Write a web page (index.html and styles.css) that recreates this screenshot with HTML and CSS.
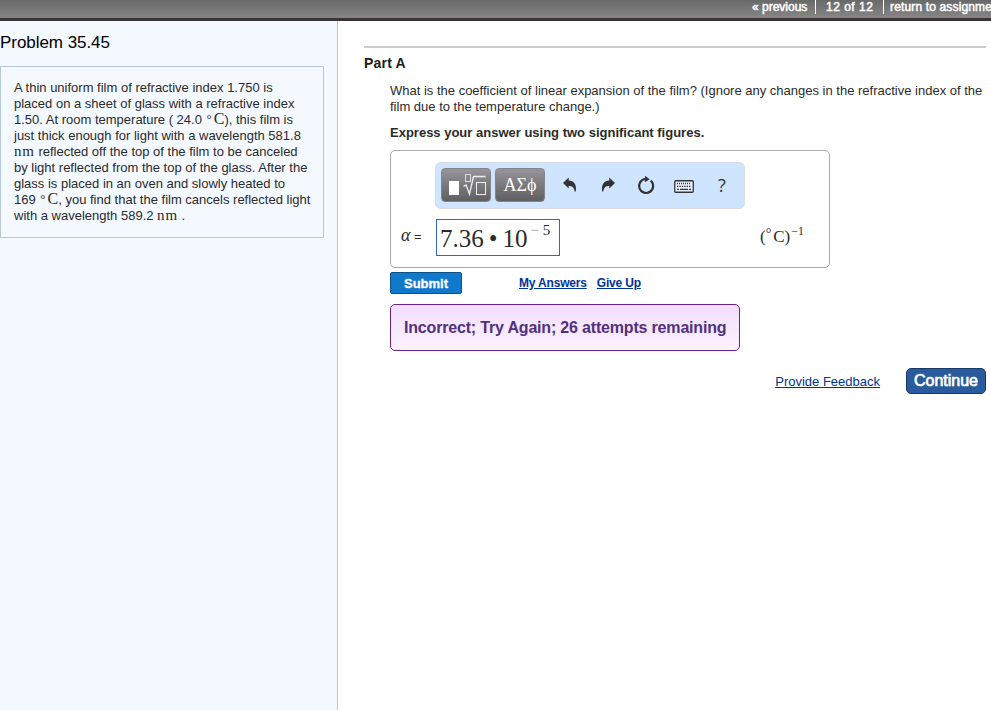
FILE: index.html
```html
<!DOCTYPE html>
<html>
	<head>
		<meta charset="UTF-8">
		<title>Problem 35.45</title>
		<link rel="stylesheet" href="styles.css">
	</head>
	<body>
		<div class="topbar">
			<a class="prev">« previous</a>
			<span class="count">12 of 12</span>
			<a class="return">return to assignme</a>
		</div>
		<div class="page">
			<div class="sidebar">
				<h1>Problem 35.45</h1>
				<div class="problem">
					<span>A thin uniform film of refractive index 1.750 is</span><br>
					<span>placed on a sheet of glass with a refractive index</span><br>
					<span>1.50. At room temperature ( 24.0 <i class="deg">°</i><b class="math">C</b>), this film is</span><br>
					<span>just thick enough for light with a wavelength 581.8</span><br>
					<span><b class="unit">nm</b> reflected off the top of the film to be canceled</span><br>
					<span>by light reflected from the top of the glass. After the</span><br>
					<span>glass is placed in an oven and slowly heated to</span><br>
					<span>169 <i class="deg">°</i><b class="math">C</b>, you find that the film cancels reflected light</span><br>
					<span>with a wavelength 589.2 <b class="unit">nm</b> .</span>
				</div>
			</div>
			<div class="main">
				<h2>Part A</h2>
				<div class="part">
					<p class="question"><span class="q1">What is the coefficient of linear expansion of the film? (Ignore any changes in the refractive index of the</span><br><span>film due to the temperature change.)</span></p>
					<p class="express">Express your answer using two significant figures.</p>
					<div class="answer">
						<div class="toolbar">
							<div class="tool">
								<svg width="40" height="24" viewBox="0 0 40 24">
									<rect x="3" y="8" width="10" height="14" fill="#fff"/>
									<rect x="19.500" y="1.500" width="5" height="7" fill="none" stroke="#ddd"/>
									<path d="M17.500 13.500l2.500-1.500 3.500 9L27.500 3.500H39.500" fill="none" stroke="#eee" stroke-width="1.300"/>
									<rect x="30.500" y="9.500" width="9" height="12" fill="none" stroke="#eee"/>
								</svg>
							</div>
							<div class="tool greek">ΑΣϕ</div>
							<svg class="icon undo" width="16" height="16" viewBox="0 0 16 16">
								<path d="M1 6L6.700 .5v3C11.500 3.700 15 7 13.800 14.500h-1.200C12.300 10.600 10.200 9 6.700 8.800V11.500z" fill="#333"/>
							</svg>
							<svg class="icon redo" width="16" height="16" viewBox="0 0 16 16">
								<path d="M15 6L9.300 .5v3C4.500 3.700 1 7 2.200 14.500h1.200C3.700 10.600 5.800 9 9.300 8.800V11.500z" fill="#333"/>
							</svg>
							<svg class="icon reset" width="18" height="20" viewBox="0 0 18 20">
								<path d="M13.700 5.700A7 7 0 1 1 8.500 4" fill="none" stroke="#333" stroke-width="2.200"/>
								<path d="M8 .8L12.700 4.200 8 7.200z" fill="#333"/>
							</svg>
							<svg class="icon keys" width="20" height="13" viewBox="0 0 20 13">
								<rect x=".75" y=".75" width="18.500" height="11.500" rx="1" fill="#e8f2ff" stroke="#333" stroke-width="1.300"/>
								<path d="M3 3.500h14" stroke="#333" stroke-width="1.300" stroke-dasharray="1 1"/>
								<path d="M3 6.300h14" stroke="#333" stroke-width="1.300" stroke-dasharray="1.400 1"/>
								<path d="M3 9.300h2M6 9.300h8M15 9.300h2" stroke="#333" stroke-width="1.300"/>
							</svg>
							<span class="help">?</span>
						</div>
						<div class="entry">
							<span class="label"><i>α</i> =</span>
							<div class="field">7.36<span class="dot">•</span>10<sup><em>−</em> 5</sup></div>
							<div class="answer-unit">(<i>°</i>C)<sup>−1</sup></div>
						</div>
					</div>
					<div class="actions">
						<button class="submit">Submit</button>
						<a class="my">My Answers</a>
						<a class="give">Give Up</a>
					</div>
					<div class="feedback"><span>Incorrect; Try Again; 26 attempts remaining</span></div>
				</div>
				<div class="bottom">
					<a>Provide Feedback</a>
					<button class="continue">Continue</button>
				</div>
			</div>
		</div>
	</body>
</html>
```
FILE: styles.css
```css
*{margin:0;padding:0;box-sizing:border-box;}
body{
	height: 710px;
	overflow: hidden;
	background: #fff;
	color: #2b2b2b;
	font: 13px/16px "Liberation Sans", Arial, sans-serif;
}
.topbar{
	display: flex;
	justify-content: flex-end;
	height: 21px;
	background: linear-gradient(#686a68, #848484 17px);
	border-bottom: 3px solid #393535;
	color: #fff;
	font-size: 12px;
	line-height: 14px;
	-webkit-text-stroke: 0.5px #fff;
	white-space: nowrap;
	overflow: hidden;
}
.topbar .prev{
	width: 64px;
	height: 14px;
	border-right: 1px solid #fff;
}
.topbar .count{
	width: 68px;
	height: 14px;
	padding-left: 10px;
	border-right: 1px solid #fff;
	letter-spacing: 0.5px;
}
.topbar .return{
	width: 107px;
	padding-left: 6px;
	letter-spacing: 0.15px;
}
.page{
	display: flex;
	height: 689px;
}
.sidebar{
	width: 338px;
	flex: none;
	background: #f4f8ff;
	border-right: 1px solid #b4c5d5;
}
h1{
	height: 45px;
	padding-top: 12px;
	font-size: 17px;
	line-height: 19px;
	font-weight: normal;
	letter-spacing: -0.05px;
	color: #000;
}
.problem{
	width: 324px;
	height: 172px;
	padding: 13px 0 0 13px;
	border: 1px solid #b6c9dc;
	white-space: nowrap;
}
.problem b, .problem i{
	font-family: "Liberation Serif", serif;
	font-weight: normal;
	font-style: normal;
	line-height: 0;
}
.math{font-size: 16px;}
.problem .deg{
	font-size: 13px;
	padding: 0 2px 0 1px;
	vertical-align: 1px;
}
.unit{
	font-size: 15px;
	letter-spacing: 0.8px;
}
.main{
	flex: 1;
	padding: 25px 5px 0 26px;
}
h2{
	height: 37px;
	padding-top: 7px;
	border-top: 2px solid #ccc;
	font-size: 14px;
	line-height: 17px;
	letter-spacing: 0.2px;
	color: #1c1c1c;
}
.part{padding-left: 26px;}
.question{white-space: nowrap;}
.express{
	margin-top: 10px;
	font-weight: bold;
}
.answer{
	width: 440px;
	height: 118px;
	margin-top: 9px;
	padding: 11px 0 0 10px;
	border: 1px solid #aaa;
	border-radius: 5px;
}
.toolbar{
	display: flex;
	align-items: center;
	width: 310px;
	height: 47px;
	margin-left: 34px;
	padding: 0 0 2px 5px;
	background: #cfe4ff;
	border: 1px solid #d9dde3;
	border-radius: 6px;
}
.tool{
	display: flex;
	align-items: center;
	justify-content: center;
	width: 50px;
	height: 34px;
	margin-right: 4px;
	background: linear-gradient(#96959b, #5f5f60);
	border: 1px solid #858588;
	border-radius: 4px;
	color: #fff;
}
.greek{
	font: 18px/30px "Liberation Serif", serif;
}
.icon{flex: none;}
.undo{margin-left: 13px;}
.redo{margin-left: 22px;}
.reset{margin-left: 21px;}
.keys{
	margin-left: 19px;
	margin-top: 4px;
}
.help{
	margin-left: 24px;
	color: #333;
	font: 18px/20px "Open Sans", sans-serif;
}
.entry{
	display: flex;
	margin-top: 10px;
}
.label{
	width: 35px;
	padding-top: 10px;
}
.label i{
	font-family: "Liberation Serif", serif;
	font-size: 18px;
	line-height: 0;
}
.field{
	width: 124px;
	height: 37px;
	padding: 5px 0 0 3px;
	border: 1px solid #36c;
	font: 25px/28px "Liberation Serif", serif;
	white-space: nowrap;
}
.field .dot{
	margin: 0 5px;
}
.field sup{
	margin-left: 3px;
	font-size: 15px;
	line-height: 0;
	vertical-align: 12px;
}
.field em{
	font-style: normal;
	color: #999;
}
.answer-unit{
	margin-left: 200px;
	padding-top: 8px;
	font: 17px/20px "Liberation Serif", serif;
	white-space: nowrap;
}
.answer-unit i{
	padding-right: 2px;
	font-style: normal;
	font-size: 14px;
	line-height: 0;
	vertical-align: 4px;
}
.answer-unit sup{
	margin-left: 1px;
	font-size: 12px;
	line-height: 0;
	vertical-align: 7px;
}
.actions{
	display: flex;
	height: 22px;
	margin-top: 4px;
	line-height: 22px;
	font-size: 12px;
	font-weight: bold;
}
a{color: #039;text-decoration: underline;}
.topbar a{color: #fff;text-decoration: none;}
button{
	font-family: "Liberation Sans", Arial, sans-serif;
	font-weight: bold;
	color: #fff;
}
.submit{
	width: 72px;
	height: 22px;
	background: #1179cb;
	border: 1px solid #0c5086;
	border-radius: 2px;
	font-size: 13px;
	line-height: 19px;
	-webkit-text-stroke: 0.3px #fff;
}
.my, .give{letter-spacing: -0.18px;}
.my{margin-left: 57px;}
.give{margin-left: 10px;}
.feedback{
	width: 350px;
	height: 47px;
	margin-top: 10px;
	padding-left: 13px;
	background: linear-gradient(#f2ddff, #fdf2ff);
	border: 1px solid #6a2584;
	border-radius: 5px;
	color: #52307c;
	font-size: 16px;
	font-weight: bold;
	line-height: 45px;
	letter-spacing: -0.18px;
	white-space: nowrap;
}
.bottom{
	display: flex;
	justify-content: flex-end;
	margin-top: 17px;
	line-height: 27px;
}
.continue{
	width: 80px;
	height: 26px;
	margin-left: 26px;
	background: #2a5b9c;
	border: 1px solid #163a66;
	border-radius: 5px;
	font-size: 16px;
	font-weight: normal;
	line-height: 22px;
	-webkit-text-stroke: 0.7px #fff;
}
```
